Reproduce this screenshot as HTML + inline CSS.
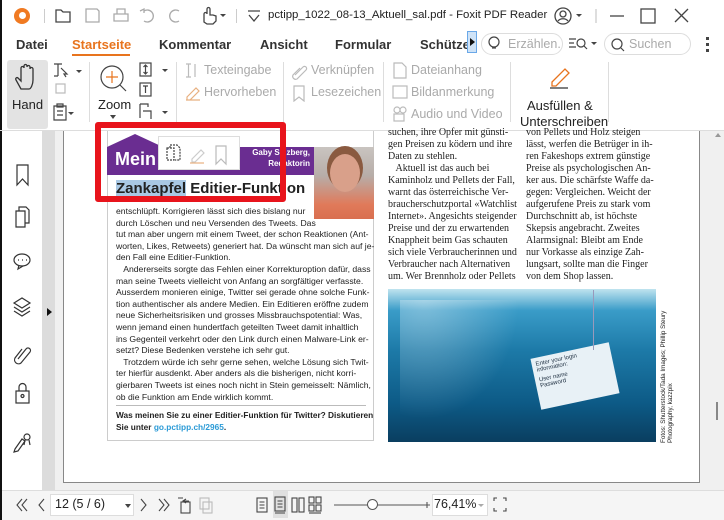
<!DOCTYPE html>
<html><head><meta charset="utf-8"><style>
*{margin:0;padding:0;box-sizing:border-box}
body{width:724px;height:520px;overflow:hidden;background:#fff;font-family:"Liberation Sans",sans-serif;position:relative;color:#222}
.a{position:absolute}
.t{font-size:13px;color:#222;white-space:nowrap}
.g{color:#aaa;font-size:12.5px;white-space:nowrap}
.sv{position:absolute}
.l{font-size:8.65px;line-height:11.6px;white-space:nowrap;color:#222}
.s{font-family:"Liberation Serif",serif;font-size:10px;line-height:12px;white-space:nowrap;color:#222}
</style></head><body>
<div class="a" style="left:0;top:0;width:2px;height:520px;background:#111"></div>
<!-- title bar -->
<div class="a" style="left:14px;top:8px;width:16px;height:16px;border-radius:50%;background:#f07a22"></div>
<div class="a" style="left:19px;top:12px;width:7px;height:7px;border-radius:50%;background:#fff"></div>
<div class="a" style="left:44px;top:9px;width:1px;height:14px;background:#ccc"></div>
<svg class="sv" style="left:54px;top:6px" width="180" height="20" fill="none" stroke="#444" stroke-width="1.3">
<path d="M2 4h5l2 2h7v10H2z"/><path d="M32 3h11l2 2v11H32z" stroke="#aaa"/><path d="M60 8h14v7H60zM63 8V3h8v5" stroke="#aaa"/>
<path d="M90 5a6 6 0 1 1 0 10M86 5l4-2v4" stroke="#aaa"/><path d="M125 5a6 6 0 1 0 0 10" stroke="#aaa"/>
<path d="M150 16v-8a1.5 1.5 0 0 1 3 0v-5a1.5 1.5 0 0 1 3 0v6l3 0 3 1v5l-3 3h-6z"/>
<path d="M166 8l3 3 3-3" fill="#444" stroke="none"/></svg>
<div class="a" style="left:236px;top:9px;width:1px;height:14px;background:#ccc"></div>
<svg class="sv" style="left:246px;top:8px" width="16" height="16" fill="none" stroke="#444" stroke-width="1.3"><path d="M2 3h12M3 7l5 6 5-6"/></svg>
<div class="a t" style="left:268px;top:9px;font-size:11.4px">pctipp_1022_08-13_Aktuell_sal.pdf - Foxit PDF Reader</div>
<svg class="sv" style="left:553px;top:6px" width="170" height="20" fill="none" stroke="#444" stroke-width="1.3">
<circle cx="10" cy="10" r="8"/><circle cx="10" cy="8" r="3"/><path d="M5 15a6 5 0 0 1 10 0"/><path d="M23 8l3 3 3-3" fill="#444" stroke="none"/>
<path d="M43 3v14" stroke="#ccc"/><path d="M57 10h14"/><rect x="88" y="3" width="14" height="14"/><path d="M122 3l13 13M135 3l-13 13"/></svg>
<!-- menu -->
<div class="a t" style="left:16px;top:37px;font-weight:bold;color:#333">Datei</div>
<div class="a t" style="left:72px;top:37px;font-weight:bold;color:#e8741e">Startseite</div>
<div class="a" style="left:72px;top:54px;width:58px;height:2px;background:#e8741e"></div>
<div class="a t" style="left:159px;top:37px;font-weight:bold;color:#333">Kommentar</div>
<div class="a t" style="left:260px;top:37px;font-weight:bold;color:#333">Ansicht</div>
<div class="a t" style="left:335px;top:37px;font-weight:bold;color:#333">Formular</div>
<div class="a t" style="left:420px;top:37px;font-weight:bold;color:#333">Schütze</div>
<div class="a" style="left:467px;top:31px;width:10px;height:22px;background:#cfe3f7;border:1px solid #6aa8e8"></div>
<div class="a" style="left:470px;top:38px;border-left:5px solid #111;border-top:4px solid transparent;border-bottom:4px solid transparent"></div>
<div class="a" style="left:481px;top:33px;width:82px;height:22px;border:1px solid #ddd;border-radius:11px"></div>
<svg class="sv" style="left:487px;top:36px" width="14" height="16" fill="none" stroke="#444" stroke-width="1.2"><circle cx="7" cy="6" r="5"/><path d="M5 12h4"/></svg>
<div class="a g" style="left:508px;top:37px">Erzählen.</div>
<svg class="sv" style="left:568px;top:36px" width="36" height="16" fill="none" stroke="#444" stroke-width="1.2"><path d="M1 3h7M1 7h5M1 11h7"/><circle cx="13" cy="7" r="4"/><path d="M16 10l3 3"/><path d="M23 6l3 3 3-3" fill="#444" stroke="none"/></svg>
<div class="a" style="left:604px;top:33px;width:87px;height:22px;border:1px solid #ddd;border-radius:11px"></div>
<svg class="sv" style="left:610px;top:37px" width="16" height="16" fill="none" stroke="#444" stroke-width="1.2"><circle cx="7" cy="7" r="5"/><path d="M11 11l3 3"/></svg>
<div class="a g" style="left:629px;top:37px">Suchen</div>
<div class="a" style="left:706px;top:37px;width:3px;height:3px;background:#444;box-shadow:0 6px #444,0 12px #444"></div>
<!-- ribbon -->
<div class="a" style="left:7px;top:60px;width:41px;height:69px;background:#e3e3e3;border-radius:3px"></div>
<svg class="sv" style="left:14px;top:63px" width="28" height="30" fill="none" stroke="#333" stroke-width="1.3"><path d="M7 26l-5-9c-1-2 1-3 2-2l3 3V5a1.5 1.5 0 0 1 3 0V3a1.5 1.5 0 0 1 3 0v1a1.5 1.5 0 0 1 3 0v2a1.5 1.5 0 0 1 3 0v11c0 4-2 9-4 9z"/></svg>
<div class="a t" style="left:12px;top:97px">Hand</div>
<svg class="sv" style="left:52px;top:62px" width="30" height="64" fill="none" stroke="#444" stroke-width="1.2">
<path d="M2 2h8M6 2v12M2 14h4M9 6l6 6-3 0 2 3"/><path d="M24 8l3 3 3-3" fill="#444" stroke="none"/>
<rect x="4" y="22" width="9" height="9" stroke="#bbb"/><path d="M2 44h12v14H2zM5 42h6v3H5zM5 49h6M5 53h6"/><path d="M16 50l3 3 3-3" fill="#444" stroke="none"/></svg>
<div class="a" style="left:89px;top:62px;width:1px;height:60px;background:#ddd"></div>
<svg class="sv" style="left:99px;top:64px" width="30" height="30" fill="none" stroke="#444" stroke-width="1.2"><circle cx="13" cy="13" r="11"/><path d="M21 21l6 6"/><path d="M13 7v12M7 13h12" stroke="#e8741e"/></svg>
<div class="a t" style="left:98px;top:97px">Zoom</div>
<div class="a" style="left:110px;top:115px;border-top:4px solid #444;border-left:3.5px solid transparent;border-right:3.5px solid transparent"></div>
<svg class="sv" style="left:137px;top:61px" width="35" height="62" fill="none" stroke="#444" stroke-width="1.2">
<rect x="3" y="2" width="11" height="13"/><path d="M8.5 4v9M6.5 6l2-2 2 2M6.5 11l2 2 2-2"/><path d="M25 8l3 3 3-3" fill="#444" stroke="none"/>
<rect x="3" y="22" width="11" height="13"/><path d="M6 25h5M8.5 25v7"/>
<path d="M3 43h8v3M3 43v14M6 50h8v8"/><path d="M25 50l3 3 3-3" fill="#444" stroke="none"/></svg>
<div class="a" style="left:176px;top:62px;width:1px;height:60px;background:#ddd"></div>
<svg class="sv" style="left:184px;top:62px" width="18" height="40" fill="none" stroke="#bbb" stroke-width="1.2"><path d="M2 2h5M4.5 2v13M2 15h5M11 2v13"/><path d="M3 35l9-9 3 3-9 9H3z M2 38h14" stroke="#e8b080"/></svg>
<div class="a g" style="left:204px;top:63px">Texteingabe</div>
<div class="a g" style="left:204px;top:85px">Hervorheben</div>
<div class="a" style="left:283px;top:62px;width:1px;height:60px;background:#ddd"></div>
<svg class="sv" style="left:291px;top:62px" width="18" height="40" fill="none" stroke="#bbb" stroke-width="1.2"><path d="M4 13l8-8a2 2 0 0 1 3 3l-9 9a3 3 0 0 1-4-4l7-7"/><path d="M3 24h10v15l-5-4-5 4z"/></svg>
<div class="a g" style="left:311px;top:63px">Verknüpfen</div>
<div class="a g" style="left:311px;top:85px">Lesezeichen</div>
<div class="a" style="left:383px;top:62px;width:1px;height:60px;background:#ddd"></div>
<svg class="sv" style="left:391px;top:61px" width="18" height="62" fill="none" stroke="#bbb" stroke-width="1.2"><path d="M3 2h8l4 4v11H3z"/><rect x="2" y="25" width="14" height="12"/><circle cx="6" cy="49" r="3"/><circle cx="12" cy="49" r="3"/><rect x="3" y="53" width="10" height="7"/></svg>
<div class="a g" style="left:411px;top:63px">Dateianhang</div>
<div class="a g" style="left:411px;top:85px">Bildanmerkung</div>
<div class="a g" style="left:411px;top:107px">Audio und Video</div>
<div class="a" style="left:510px;top:62px;width:1px;height:60px;background:#ddd"></div>
<svg class="sv" style="left:548px;top:64px" width="26" height="26" fill="none" stroke="#e8741e" stroke-width="1.3"><path d="M4 18l13-13 4 4-13 13H4z"/><path d="M2 24h18" stroke="#333"/></svg>
<div class="a t" style="left:527px;top:98px">Ausfüllen &amp;</div>
<div class="a t" style="left:520px;top:114px">Unterschreiben</div>
<div class="a" style="left:608px;top:62px;width:1px;height:60px;background:#ddd"></div>
<div class="a" style="left:0;top:130px;width:724px;height:1px;background:#ddd"></div>
<!-- left sidebar -->
<div class="a" style="left:2px;top:131px;width:40px;height:359px;background:#fff"></div>
<svg class="sv" style="left:12px;top:131px" width="22" height="330" fill="none" stroke="#333" stroke-width="1.2">
<path d="M5 34h11v20l-5.5-6-5.5 6z"/>
<path d="M4 96h9v-16h-9zM7 80v-4h7l3 3v13h-4"/>
<ellipse cx="10" cy="129" rx="8" ry="6"/><path d="M7 134l-1 4 5-3"/><path d="M6 129h1M10 129h1M14 129h1"/>
<path d="M2 172l8-5 8 5-8 5zM2 176l8 5 8-5M2 180l8 5 8-5"/>
<path d="M6 228l8-10a2.5 2.5 0 0 1 4 3l-9 11a4 4 0 0 1-6-5l7-9"/>
<rect x="4" y="260" width="13" height="12"/><path d="M7 260v-4a3.5 3.5 0 0 1 7 0v4"/><circle cx="10.5" cy="265" r="1.5"/>
<path d="M3 318l7-10 3 2-7 10-4 1z"/><circle cx="15" cy="306" r="3"/><path d="M13 309l-1 5M17 309l1 5"/></svg>
<div class="a" style="left:42px;top:131px;width:13px;height:359px;background:#dcdcdc"></div>
<div class="a" style="left:47px;top:308px;border-left:5px solid #111;border-top:4px solid transparent;border-bottom:4px solid transparent"></div>
<!-- doc area -->
<div class="a" style="left:55px;top:131px;width:657px;height:359px;background:#f0f0f0"></div>
<div class="a" style="left:63px;top:131px;width:637px;height:352px;background:#fff;border:1px solid #888;border-top:none"></div>
<div class="a" style="left:712px;top:131px;width:12px;height:359px;background:#f0f0f0"></div>
<div class="a" style="left:715px;top:133px;border-bottom:4px solid #999;border-left:3px solid transparent;border-right:3px solid transparent"></div>
<div class="a" style="left:716px;top:402px;width:2px;height:18px;background:#888"></div>
<!-- left column article -->
<div class="a" style="left:107px;top:131px;width:267px;height:310px;border:1px solid #ccc;border-top:none"></div>
<div class="a" style="left:107px;top:147px;width:207px;height:28px;background:#6a2d91"></div>
<div class="a" style="left:107px;top:134px;width:0;height:0;border-left:28px solid transparent;border-right:28px solid transparent;border-bottom:13px solid #6a2d91"></div>
<div class="a" style="left:115px;top:149px;color:#fff;font-weight:bold;font-size:18px">Mein</div>
<div class="a" style="left:245px;top:148px;color:#fff;font-weight:bold;font-size:8px;text-align:right;width:65px;line-height:10.5px">Gaby Salzberg,<br>Redaktorin</div>
<div class="a" style="left:314px;top:147px;width:60px;height:72px;background:linear-gradient(#c9c4c0,#b7ada8 40%,#e07a5a 80%,#d96f50)"></div>
<div class="a" style="left:330px;top:154px;width:30px;height:38px;border-radius:50%;background:#d9a08a;box-shadow:0 -5px 0 3px #8a5a40"></div>
<div class="a" style="left:158px;top:136px;width:82px;height:34px;background:#fff;border:1px solid #ddd"></div>
<svg class="sv" style="left:164px;top:144px" width="72" height="22" fill="none" stroke="#444" stroke-width="1.2"><path d="M3 4h7v12H3zM6 4V1h7l3 3v12h-5" stroke-dasharray="2 1"/><path d="M28 15l9-9 3 3-9 9h-3z" stroke="#ccc"/><path d="M26 19h14" stroke="#e8b080"/><path d="M52 2h10v18l-5-5-5 5z" stroke="#bbb"/></svg>
<div class="a" style="left:116px;top:180px;font-weight:bold;font-size:15px;color:#222"><span style="background:#a9c8e4">Zankapfel</span> Editier-Funktion</div>
<div class="a l" style="left:116px;top:206px">entschlüpft. Korrigieren lässt sich dies bislang nur<br>durch Löschen und neu Versenden des Tweets. Das<br>tut man aber ungern mit einem Tweet, der schon Reaktionen (Ant-<br>worten, Likes, Retweets) generiert hat. Da wünscht man sich auf je-<br>den Fall eine Editier-Funktion.<br>&nbsp;&nbsp;&nbsp;Andererseits sorgte das Fehlen einer Korrekturoption dafür, dass<br>man seine Tweets vielleicht von Anfang an sorgfältiger verfasste.<br>Ausserdem monieren einige, Twitter sei gerade ohne solche Funk-<br>tion authentischer als andere Medien. Ein Editieren eröffne zudem<br>neue Sicherheitsrisiken und grosses Missbrauchspotential: Was,<br>wenn jemand einen hundertfach geteilten Tweet damit inhaltlich<br>ins Gegenteil verkehrt oder den Link durch einen Malware-Link er-<br>setzt? Diese Bedenken verstehe ich sehr gut.<br>&nbsp;&nbsp;&nbsp;Trotzdem würde ich sehr gerne sehen, welche Lösung sich Twit-<br>ter hierfür ausdenkt. Aber anders als die bisherigen, nicht korri-<br>gierbaren Tweets ist eines noch nicht in Stein gemeisselt: Nämlich,<br>ob die Funktion am Ende wirklich kommt.</div>
<div class="a" style="left:116px;top:405px;width:250px;height:1px;background:#bbb"></div>
<div class="a l" style="left:116px;top:410px;font-weight:bold;font-size:8.3px">Was meinen Sie zu einer Editier-Funktion für Twitter? Diskutieren<br>Sie unter <span style="color:#2a9ad6">go.pctipp.ch/2965</span>.</div>
<!-- red box -->
<div class="a" style="left:95px;top:122px;width:191px;height:80px;border:6px solid #e8141c;border-radius:3px"></div>
<!-- middle/right columns -->
<div class="a s" style="left:388px;top:127px">suchen, ihre Opfer mit günsti-<br>gen Preisen zu ködern und ihre<br>Daten zu stehlen.<br>&nbsp;&nbsp;&nbsp;Aktuell ist das auch bei<br>Kaminholz und Pellets der Fall,<br>warnt das österreichische Ver-<br>braucherschutzportal «Watchlist<br>Internet». Angesichts steigender<br>Preise und der zu erwartenden<br>Knappheit beim Gas schauten<br>sich viele Verbraucherinnen und<br>Verbraucher nach Alternativen<br>um. Wer Brennholz oder Pellets</div>
<div class="a s" style="left:526px;top:127px">von Pellets und Holz steigen<br>lässt, werfen die Betrüger in ih-<br>ren Fakeshops extrem günstige<br>Preise als psychologischen An-<br>ker aus. Die schärfste Waffe da-<br>gegen: Vergleichen. Weicht der<br>aufgerufene Preis zu stark vom<br>Durchschnitt ab, ist höchste<br>Skepsis angebracht. Zweites<br>Alarmsignal: Bleibt am Ende<br>nur Vorkasse als einzige Zah-<br>lungsart, sollte man die Finger<br>von dem Shop lassen.</div>
<div class="a" style="left:388px;top:289px;width:268px;height:153px;background:linear-gradient(180deg,#bfe3ef 0%,#3a9cc8 14%,#1d7aa8 40%,#0d5a86 75%,#0a3e60 100%)"></div>
<div class="a" style="left:400px;top:300px;width:120px;height:120px;background:radial-gradient(ellipse at 20% 0%,rgba(255,255,255,.35),transparent 70%)"></div>
<div class="a" style="left:535px;top:350px;width:80px;height:52px;background:#e8f1f6;transform:rotate(-12deg);font-size:6px;color:#234;padding:4px">Enter your login information:<div style="margin-top:4px">User name</div><div>Password</div></div>
<div class="a" style="left:593px;top:290px;width:1px;height:60px;background:#99b"></div>
<div class="a" style="left:660px;transform:rotate(-90deg);transform-origin:0 0;font-size:6.3px;white-space:nowrap;top:443px;line-height:7px">Fotos: Shutterstock/Tada Images; Phillip Steury<br>Photography, kazzpix</div>
<!-- bottom bar -->
<div class="a" style="left:2px;top:490px;width:722px;height:30px;background:#f5f5f5;border-top:1px solid #ddd"></div>
<div class="a" style="left:273px;top:491px;width:15px;height:27px;background:#e0e0e0"></div>
<svg class="sv" style="left:0;top:494px" width="724" height="22" fill="none" stroke="#444" stroke-width="1.1">
<path d="M22 5l-5 6 5 6M27 5l-5 6 5 6M44 5l-5 6 5 6M141 5l5 6-5 6M159 5l5 6-5 6M164 5l5 6-5 6"/>
<rect x="181" y="8" width="9" height="11"/><path d="M178 4h5M186 5l-3 2 3 2M183 7h6"/><rect x="200" y="4" width="9" height="11" stroke="#bbb"/><rect x="203" y="8" width="9" height="11" stroke="#bbb"/>
<rect x="257" y="4" width="10" height="14"/><path d="M259.5 8h5M259.5 11h5M259.5 14h5"/>
<rect x="275" y="3" width="10" height="14"/><path d="M277.5 7h5M277.5 10h5M277.5 13h5M275 19h10"/>
<rect x="292" y="4" width="5" height="14"/><rect x="299" y="4" width="5" height="14"/>
<rect x="309" y="3" width="5" height="6"/><rect x="316" y="3" width="5" height="6"/><rect x="309" y="11" width="5" height="6"/><rect x="316" y="11" width="5" height="6"/><path d="M309 19h12"/>
<path d="M334 11h6M340 11h90M424 11h6M427 8v6" stroke="#555"/>
<path d="M494 7V4h3M503 4h3v3M494 14v3h3M506 14v3h-3"/></svg>
<div class="a" style="left:367px;top:499px;width:11px;height:11px;border:1px solid #555;border-radius:50%;background:#fff"></div>
<div class="a" style="left:50px;top:494px;width:84px;height:22px;background:#fff;border:1px solid #ddd"></div>
<div class="a" style="left:55px;top:497px;font-size:12.5px;color:#222">12 (5 / 6)</div>
<div class="a" style="left:125px;top:504px;border-top:4px solid #444;border-left:3.5px solid transparent;border-right:3.5px solid transparent"></div>
<div class="a" style="left:432px;top:494px;width:56px;height:22px;background:#fff;border:1px solid #ddd"></div>
<div class="a" style="left:434px;top:497px;font-size:12.5px;color:#222">76,41%</div>
<div class="a" style="left:478px;top:504px;border-top:3px solid #aaa;border-left:3px solid transparent;border-right:3px solid transparent"></div>
</body></html>
